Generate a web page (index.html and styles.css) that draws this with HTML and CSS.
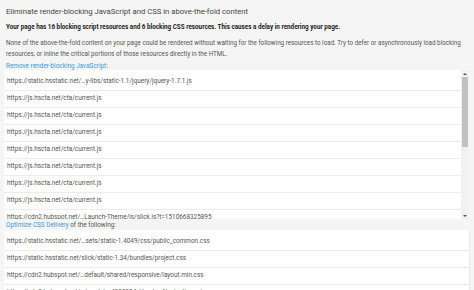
FILE: index.html
```html
<!doctype html>
<html lang="en">
<head>
<meta charset="UTF-8">
<meta name="viewport" content="width=device-width, initial-scale=1">
<title>Render-blocking resources</title>
<link rel="stylesheet" href="styles.css">
</head>
<body>
<div id="rule">
    <div class="rule-title">Eliminate render-blocking JavaScript and CSS in above-the-fold content</div>
    <div class="summary">Your page has 16 blocking script resources and 6 blocking CSS resources. This causes a delay in rendering your page.</div>
    <p class="desc">None of the above-the-fold content on your page could be rendered without waiting for the following resources to load. Try to defer or asynchronously load blocking resources, or inline the critical portions of those resources directly in the HTML.</p>

    <div class="section-label"><span class="link">Remove render-blocking JavaScript</span>:</div>
    <div class="scroll-box">
        <div class="url-list">
            <div class="url">https://static.hsstatic.net/…y-libs/static-1.1/jquery/jquery-1.7.1.js</div>
            <div class="url">https://js.hscta.net/cta/current.js</div>
            <div class="url">https://js.hscta.net/cta/current.js</div>
            <div class="url">https://js.hscta.net/cta/current.js</div>
            <div class="url">https://js.hscta.net/cta/current.js</div>
            <div class="url">https://js.hscta.net/cta/current.js</div>
            <div class="url">https://js.hscta.net/cta/current.js</div>
            <div class="url">https://js.hscta.net/cta/current.js</div>
            <div class="url">https://cdn2.hubspot.net/…Launch-Theme/js/slick.js?t=1510668325895</div>
        </div>
        <!-- fake scrollbar -->
        <div class="scrollbar">
            <div class="arrow up"></div>
            <div class="track"><div class="thumb"></div></div>
            <div class="arrow down"></div>
        </div>
    </div>

    <div class="section-label css-label"><span class="link">Optimize CSS Delivery</span> of the following:</div>
    <div class="url-list css-list">
        <div class="url">https://static.hsstatic.net/…sets/static-1.4049/css/public_common.css</div>
        <div class="url">https://static.hsstatic.net/slick/static-1.34/bundles/project.css</div>
        <div class="url">https://cdn2.hubspot.net/…default/shared/responsive/layout.min.css</div>
        <div class="url">https://cdn2.hubspot.net/…/module_4938934_Header_Navigation.min.css</div>
    </div>
</div>
</body>
</html>
```

FILE: styles.css
```css
body {
    margin: 0;
    background: #f5f5f5;
    font-family: Roboto, "Liberation Sans", sans-serif;
    color: #555;
    overflow: hidden;
    height: 290px;
}

#rule {
    padding: 7px 4px 0 4px;
}

.rule-title {
    font-size: 7.7px;
    color: #444;
    padding-left: 2px;
    line-height: 10px;
}

.summary {
    margin-top: 6px;
    padding-left: 2px;
    font-size: 6.3px;
    font-weight: bold;
    color: #222;
    line-height: 9px;
}

.desc {
    margin: 6px 0 0 0;
    padding-left: 2px;
    font-size: 6.3px;
    line-height: 11px;
    color: #555;
}

.section-label {
    margin-top: 2px;
    padding-left: 2px;
    font-size: 6.4px;
    line-height: 8px;
    color: #555;
}

.link {
    color: #3b97d8;
}

.scroll-box {
    display: flex;
    height: 149px;
    width: 464px;
    overflow: hidden;
}

.url-list {
    flex: 1;
    background: #fff;
    padding-top: 4px;
}

.url {
    height: 16px;
    line-height: 15px;
    border-bottom: 1px solid #ececec;
    padding-left: 3px;
    font-size: 6.4px;
    color: #555;
    white-space: nowrap;
    overflow: hidden;
}

.scrollbar {
    width: 7px;
    display: flex;
    flex-direction: column;
    background: #f1f1f1;
}

.arrow {
    height: 7px;
    display: flex;
    justify-content: center;
    align-items: center;
}

.arrow::before {
    content: "";
    border-left: 2px solid transparent;
    border-right: 2px solid transparent;
}

.arrow.up::before {
    border-bottom: 2px solid #555;
}

.arrow.down::before {
    border-top: 2px solid #555;
}

.track {
    flex: 1;
}

.thumb {
    height: 70px;
    margin: 0 0.5px;
    background: #c1c1c1;
}

.css-label {
    margin-top: 2px;
    line-height: 9px;
}

.css-list {
    width: 465px;
    border-right: 1px solid #e8e8e8;
}
```
